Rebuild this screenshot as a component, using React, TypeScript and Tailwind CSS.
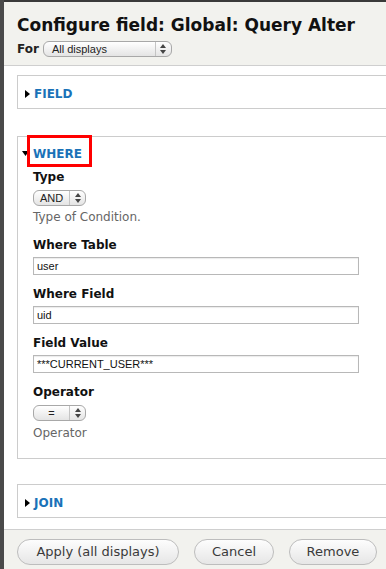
import React from "react";

const font = { fontFamily: '"DejaVu Sans", "Liberation Sans", sans-serif' };

function Arrows() {
  return (
    <svg width="6" height="10" viewBox="0 0 6 10" className="block">
      <path d="M3 0 L6 4 L0 4 Z" fill="#444" />
      <path d="M0 6 L6 6 L3 10 Z" fill="#444" />
    </svg>
  );
}

function Select({ label, width, center }: { label: string; width: string; center?: boolean }) {
  return (
    <div
      className={`flex h-[16px] ${width} items-stretch rounded-[6px] border border-[#a8a8a8] bg-gradient-to-b from-[#ffffff] to-[#e4e4e4] text-[11px] leading-none text-[#222]`}
      style={{ fontFamily: '"Liberation Sans", Arial, sans-serif' }}
    >
      <div className={`flex flex-1 items-center ${center ? "justify-center" : "pl-[8px]"}`}>{label}</div>
      <div className="flex w-[16px] items-center justify-center border-l border-[#c4c4c4]">
        <Arrows />
      </div>
    </div>
  );
}

function RightTri() {
  return (
    <svg width="5" height="8" viewBox="0 0 5 8" className="block">
      <path d="M0 0 L5 4 L0 8 Z" fill="#000" />
    </svg>
  );
}

function DownTri() {
  return (
    <svg width="7" height="5" viewBox="0 0 7 5" className="block">
      <path d="M0 0 L7 0 L3.5 5 Z" fill="#000" />
    </svg>
  );
}

function Label({ children, mt }: { children: React.ReactNode; mt: string }) {
  return <div className={`${mt} text-[12px] font-bold leading-[16px] text-[#111]`}>{children}</div>;
}

function Input({ value }: { value: string }) {
  return (
    <div
      className="mt-[4px] flex h-[18px] w-[326px] items-center border border-[#b8b8b8] bg-white pl-[3px] text-[11px] text-[#111] shadow-[inset_0_1px_1px_rgba(0,0,0,0.08)]"
      style={{ fontFamily: '"Liberation Sans", Arial, sans-serif' }}
    >
      {value}
    </div>
  );
}

function Collapsed({ title }: { title: string }) {
  return (
    <div className="flex h-[34px] w-[420px] items-center border border-[#cccccc] pl-[7px] pt-[3px]">
      <RightTri />
      <span className="ml-[4px] text-[12px] font-bold text-[#1a72b8]">{title}</span>
    </div>
  );
}

function Button({ children, w }: { children: React.ReactNode; w: string }) {
  return (
    <div
      className={`flex h-[26px] ${w} items-center justify-center rounded-full border border-[#bdbdbd] bg-gradient-to-b from-[#fdfdfd] to-[#e6e6e6] text-[13px] text-[#3a3a3a]`}
    >
      {children}
    </div>
  );
}

export default function App() {
  return (
    <div className="flex h-[569px] w-[386px] overflow-hidden bg-[#454545]" style={font}>
      <div className="w-[4px] shrink-0 bg-[#4a4a4a]" />
      <div className="flex min-w-0 flex-1 flex-col">
        <div className="h-[2px] shrink-0 bg-[#3a3a3a]" />
        <div className="flex h-[64px] shrink-0 flex-col border-b border-[#cfcfcf] bg-[#f2f2ee] pl-[13px]">
          <div className="mt-[13px] whitespace-nowrap text-[17px] font-bold leading-[20px] text-[#111]">
            Configure field: Global: Query Alter
          </div>
          <div className="mt-[5px] flex items-center">
            <span className="text-[12px] font-bold text-[#222]">For</span>
            <div className="ml-[4px]">
              <Select label="All displays" width="w-[129px]" />
            </div>
          </div>
        </div>
        <div className="flex flex-1 flex-col bg-white pl-[13px]">
          <div className="mt-[9px]">
            <Collapsed title="FIELD" />
          </div>
          <div className="mt-[27px] w-[420px] border border-[#cccccc] pb-[17px]">
            <div className="relative flex h-[32px] items-center pl-[4px] pt-[1px]">
              <DownTri />
              <span className="ml-[4px] text-[12px] font-bold text-[#1a72b8]">WHERE</span>
              <div className="absolute left-[9px] top-[-2px] h-[32px] w-[65px] border-[3px] border-[#ff0000]" />
            </div>
            <div className="pl-[15px]">
              <Label mt="mt-0">Type</Label>
              <div className="mt-[5px]">
                <Select label="AND" width="w-[53px]" center />
              </div>
              <div className="mt-[3px] text-[12px] leading-[16px] text-[#666]">Type of Condition.</div>
              <Label mt="mt-[12px]">Where Table</Label>
              <Input value="user" />
              <Label mt="mt-[11px]">Where Field</Label>
              <Input value="uid" />
              <Label mt="mt-[11px]">Field Value</Label>
              <Input value="***CURRENT_USER***" />
              <Label mt="mt-[11px]">Operator</Label>
              <div className="mt-[5px]">
                <Select label="=" width="w-[53px]" center />
              </div>
              <div className="mt-[4px] text-[12px] leading-[16px] text-[#666]">Operator</div>
            </div>
          </div>
          <div className="mt-[25px]">
            <Collapsed title="JOIN" />
          </div>
        </div>
        <div className="flex h-[40px] shrink-0 items-start gap-[15px] border-t border-[#cfcfcf] bg-[#f2f2ee] pl-[13px] pt-[9px]">
          <Button w="w-[162px]">Apply (all displays)</Button>
          <Button w="w-[80px]">Cancel</Button>
          <Button w="w-[88px]">Remove</Button>
        </div>
      </div>
    </div>
  );
}
